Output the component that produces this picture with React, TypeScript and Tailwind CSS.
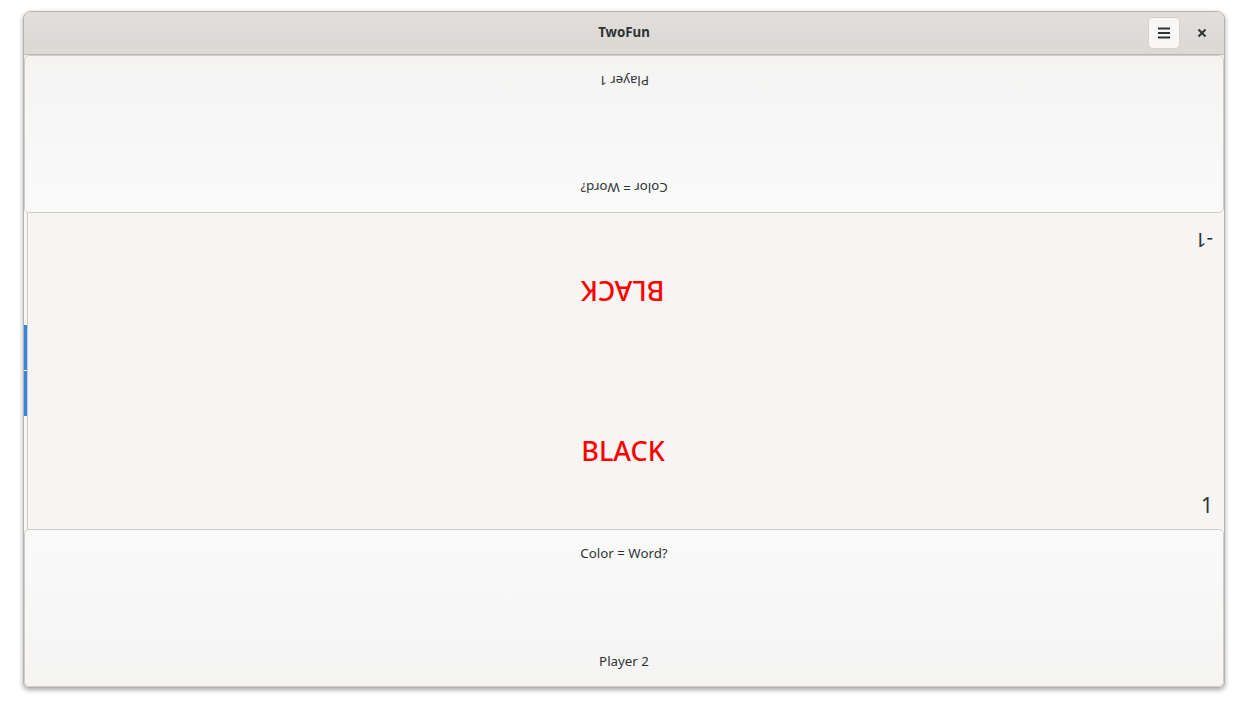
import React from 'react';

const font = { fontFamily: '"Noto Sans", "Open Sans", sans-serif' };

function PlayerButton({ flipped, label }: { flipped?: boolean; label: string }) {
  return (
    <button
      className={`h-[158px] w-full flex flex-col items-center justify-between border border-[#d2ccc7] rounded-[5px] bg-gradient-to-b from-[#fafafa] to-[#f5f4f3] text-[13.3px] text-[#2e3436] ${flipped ? 'rotate-180 pt-[15px] pb-[14px]' : 'py-[14px]'}`}
    >
      <span>Color = Word?</span>
      <span>{label}</span>
    </button>
  );
}

export default function App() {
  return (
    <div className="w-[1248px] h-[702px] bg-white pt-[11px] pl-[23px]" style={font}>
      <div className="w-[1202px] h-[677px] flex flex-col rounded-t-[8px] rounded-b-[6px] border border-[#b6b2ae] bg-[#f6f5f4] shadow-[0_2px_5px_rgba(0,0,0,0.35)] overflow-hidden">
        <div className="h-[43px] shrink-0 grid grid-cols-[1fr_auto_1fr] items-center bg-gradient-to-b from-[#e1dedb] to-[#dcd8d4] border-b border-[#bfb8b1] px-[6px]">
          <div />
          <span className="text-[13.3px] font-bold text-[#2e3436]">TwoFun</span>
          <div className="flex justify-end items-center gap-[6px]">
            <button className="w-[32px] h-[32px] rounded-[5px] bg-[#f8f7f6] border border-[#d6d1cd] flex items-center justify-center">
              <svg width="14" height="12" viewBox="0 0 14 12">
                <path d="M1 1.5h12M1 6h12M1 10.5h12" stroke="#2e3436" strokeWidth="2" />
              </svg>
            </button>
            <button className="w-[32px] h-[32px] flex items-center justify-center">
              <svg width="10" height="10" viewBox="0 0 10 10">
                <path d="M1.5 1.5l7 7M8.5 1.5l-7 7" stroke="#2e3436" strokeWidth="2" />
              </svg>
            </button>
          </div>
        </div>

        <PlayerButton flipped label="Player 1" />

        <div className="relative flex-1 border-l border-[#cfcac5] ml-[3px] pr-[6px] flex flex-col items-center justify-between py-[65px]">
          <div className="absolute -left-[4px] top-[112px] w-[3px] h-[45px] bg-[#3584e4]" />
          <div className="absolute -left-[4px] top-[158px] w-[3px] h-[45px] bg-[#3584e4]" />
          <span className="absolute right-[11px] top-[12px] rotate-180 text-[20px] text-[#2e3436]">-1</span>
          <span className="absolute right-[11px] bottom-[8px] text-[21px] text-[#2e3436]">1</span>
          <span className="rotate-180 text-[27px] font-medium text-[#ff0000] leading-none">BLACK</span>
          <span className="text-[27px] font-medium text-[#ff0000] leading-none">BLACK</span>
        </div>

        <PlayerButton label="Player 2" />
      </div>
    </div>
  );
}
